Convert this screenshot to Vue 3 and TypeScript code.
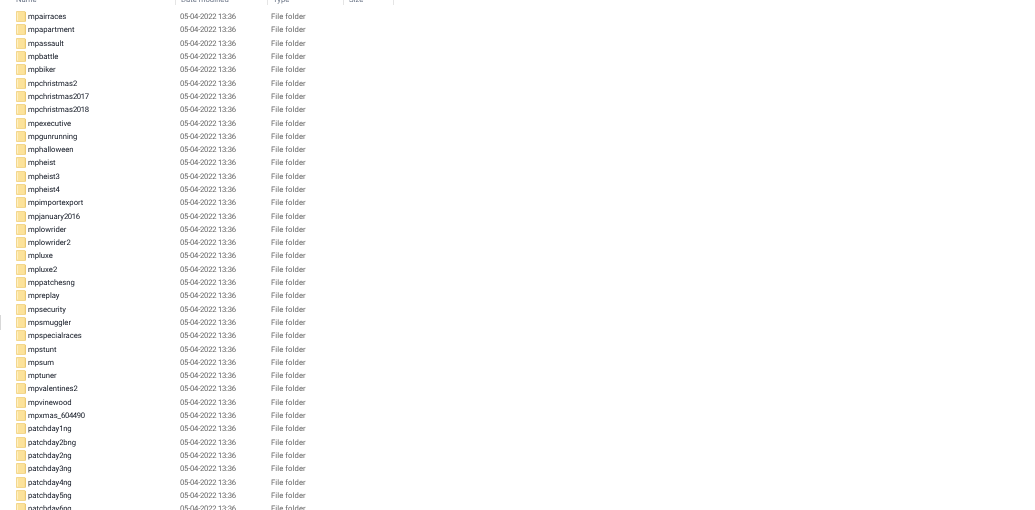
<template>
  <div class="explorer">
    <div class="edge-mark"></div>
    <div class="header-row">
      <div class="head-cell head-name">Name</div>
      <div class="head-cell head-date">Date modified</div>
      <div class="head-cell head-type">Type</div>
      <div class="head-cell head-size">Size</div>
    </div>
    <div class="file-list">
      <div v-for="folder in folders" :key="folder" class="file-row">
        <div class="col-name">
          <svg class="folder-icon" viewBox="0 0 10 11" width="10" height="11">
            <path d="M0.5 0.5H9V10.5H0.5Z" fill="#fce29a" stroke="#f3d78e" stroke-width="1" />
            <path d="M1.5 1.5V9.5" stroke="#fef0c4" stroke-width="1" />
            <path d="M9.5 1V10.5" stroke="#ecca74" stroke-width="1" />
          </svg>
          <span><span v-for="(part, i) in splitDigits(folder)" :key="i" :class="{ digits: /\d/.test(part) }">{{ part }}</span></span>
        </div>
        <div class="col-date">05-04-2022 13:36</div>
        <div class="col-type">File folder</div>
      </div>
    </div>
  </div>
</template>

<script setup lang="ts">
const folders: string[] = [
  'mpairraces', 'mpapartment', 'mpassault', 'mpbattle', 'mpbiker',
  'mpchristmas2', 'mpchristmas2017', 'mpchristmas2018', 'mpexecutive', 'mpgunrunning',
  'mphalloween', 'mpheist', 'mpheist3', 'mpheist4', 'mpimportexport',
  'mpjanuary2016', 'mplowrider', 'mplowrider2', 'mpluxe', 'mpluxe2',
  'mppatchesng', 'mpreplay', 'mpsecurity', 'mpsmuggler', 'mpspecialraces',
  'mpstunt', 'mpsum', 'mptuner', 'mpvalentines2', 'mpvinewood',
  'mpxmas_604490', 'patchday1ng', 'patchday2bng', 'patchday2ng', 'patchday3ng',
  'patchday4ng', 'patchday5ng', 'patchday6ng',
];

// Roboto digits run wider than the reference font, so they get tighter spacing
function splitDigits(name: string): string[] {
  return name.match(/\d+|\D+/g) ?? [name];
}
</script>

<style>
html, body {
  margin: 0;
  background: #fff;
  overflow: hidden;
}
</style>

<style scoped>
.explorer {
  position: relative;
  width: 1035px;
  height: 510px;
  overflow: hidden;
  background: #fff;
  font-family: Roboto, "Noto Sans", sans-serif;
  font-size: 7.7px;
  text-rendering: geometricPrecision;
  filter: blur(0.3px);
}

.edge-mark {
  position: absolute;
  left: 0;
  top: 315px;
  width: 1px;
  height: 15px;
  background: #d8d8d8;
}

.header-row {
  display: flex;
  height: 5px;
  margin-bottom: 5px;
  color: #6a7486;
  line-height: 0;
}

.head-cell {
  box-sizing: border-box;
  height: 5px;
  border-right: 1px solid #e5e5e5;
  padding-left: 5px;
  overflow: hidden;
}

.head-name { width: 176px; padding-left: 16px; }
.head-date { width: 92px; }
.head-type { width: 76px; }
.head-size { width: 50px; }

.file-list {
  display: flex;
  flex-direction: column;
}

.file-row {
  display: flex;
  align-items: center;
  height: 13.3px;
  flex: none;
}

.col-name {
  width: 180px;
  display: flex;
  align-items: center;
  gap: 2px;
  padding-left: 16px;
  box-sizing: border-box;
  color: #0e1420;
  letter-spacing: -0.02px;
}

.digits {
  letter-spacing: -0.4px;
}

.folder-icon {
  flex: none;
}

.col-date {
  width: 91px;
  color: #666;
  letter-spacing: -0.25px;
}

.col-type {
  color: #666;
  letter-spacing: 0.08px;
}
</style>
